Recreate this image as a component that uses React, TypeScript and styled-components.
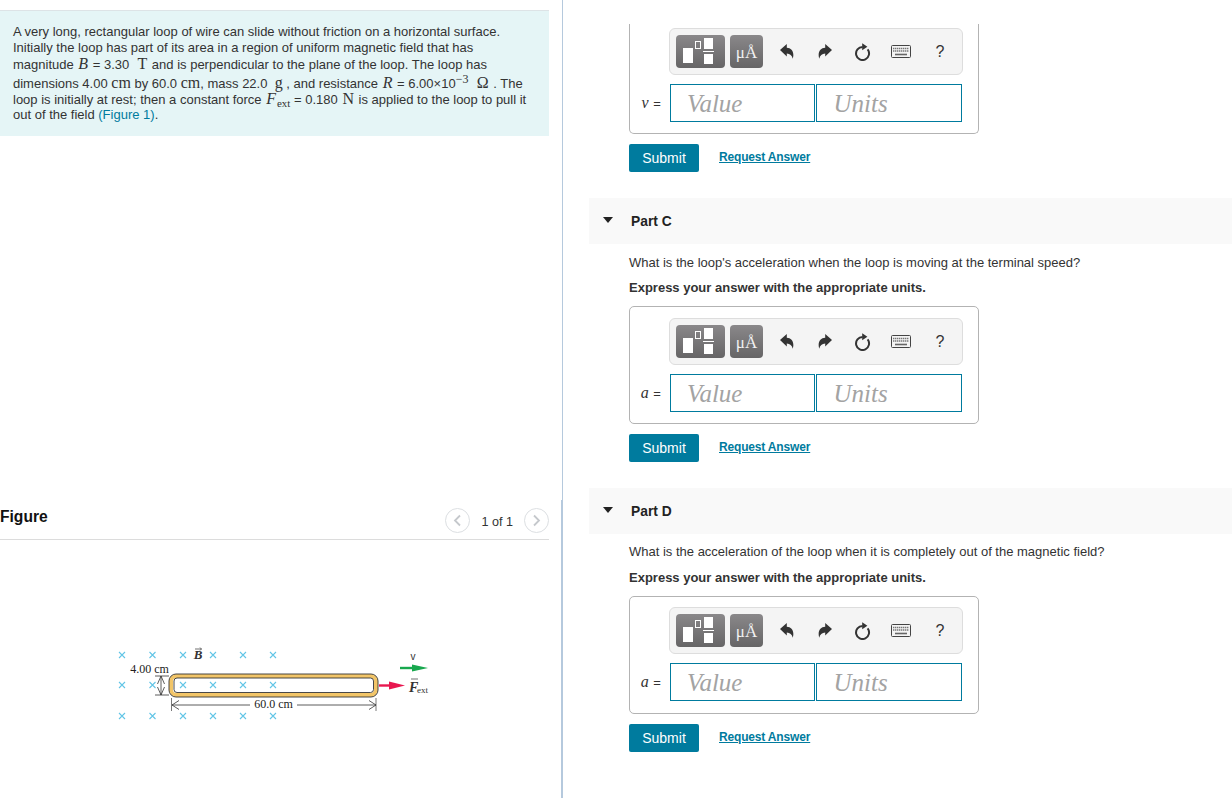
import React from 'react';
import styled, { createGlobalStyle } from 'styled-components';

const GlobalStyle = createGlobalStyle`
  html, body {
    margin: 0;
    padding: 0;
    background: #ffffff;
    overflow: hidden;
  }
  body {
    font-family: "Liberation Sans", Arial, sans-serif;
    color: #333333;
  }
`;

const Page = styled.div`
  display: grid;
  grid-template-columns: 563px 1fr;
  width: 1232px;
  height: 798px;
  overflow: hidden;
`;

const LeftPane = styled.div`
  position: relative;
  box-sizing: border-box;
  height: 798px;
  border-right: 1px solid #b5c9dd;
  padding-top: 10px;

  /* the drag handle of the split view, lower half is thicker */
  &::after {
    content: '';
    position: absolute;
    top: 500px;
    bottom: 0;
    right: 0;
    width: 1px;
    background: #b5c9dd;
  }
`;

const ProblemBox = styled.div`
  box-sizing: border-box;
  width: 549px;
  height: 126px;
  background: #e5f5f6;
  border-top: 1px solid #dde3e6;
  padding: 13px 13px 0;
  font-size: 13px;
  line-height: 16px;
  color: #333333;
`;

const Line = styled.div<{ $tall?: boolean }>`
  white-space: nowrap;
  height: ${(p) => (p.$tall ? '19px' : '16px')};
  line-height: ${(p) => (p.$tall ? '22px' : '16px')};
`;

const M = styled.span`
  font-family: "Liberation Serif", serif;
  font-size: 16px;
`;

const MI = styled(M)`
  font-style: italic;
  margin: 0 1px;
`;

const MC = styled(M)`
  margin: 0 1px;
`;

const Sup = styled.sup`
  font-size: 12px;
  line-height: 0;
  vertical-align: 5px;
  font-family: "Liberation Serif", serif;
`;

const Sub = styled.sub`
  font-family: "Liberation Serif", serif;
  font-size: 11px;
  line-height: 0;
  vertical-align: -3px;
`;

const TealLink = styled.a`
  color: #007b9e;
`;

const FigureHead = styled.div`
  box-sizing: border-box;
  width: 549px;
  height: 41px;
  margin-top: 363px;
  border-bottom: 1px solid #dcdcdc;
  display: flex;
  justify-content: space-between;
`;

const FigureTitle = styled.h2`
  margin: 9px 0 0;
  font-size: 15.6px;
  line-height: 18px;
  font-weight: 700;
  color: #111111;
`;

const Pager = styled.div`
  display: flex;
  align-items: flex-start;
  gap: 11px;
  padding-top: 9px;
  font-size: 12.6px;
  line-height: 29px;
`;

const PagerButton = styled.span`
  box-sizing: border-box;
  width: 25px;
  height: 25px;
  border: 1px solid #dcdfe2;
  border-radius: 50%;
  display: flex;
  align-items: center;
  justify-content: center;
`;

const FigureArt = styled.svg`
  display: block;
  margin: 99px 0 0 100px;
`;

const RightPane = styled.div`
  padding: 24px 0 0 26px;
`;

const Question = styled.div``;

const QuestionText = styled.p<{ $gap: number }>`
  margin: 0 0 0 40px;
  padding-top: ${(p) => p.$gap}px;
  font-size: 13px;
  line-height: 16px;
  color: #333333;
`;

const Instruction = styled.p<{ $gap: number }>`
  margin: ${(p) => p.$gap}px 0 0 40px;
  font-size: 13px;
  line-height: 16px;
  font-weight: 700;
  color: #333333;
`;

const AnswerBox = styled.div<{ $clipped?: boolean; $top?: number; $pad?: number }>`
  box-sizing: border-box;
  width: 350px;
  margin: ${(p) => p.$top ?? 0}px 0 0 40px;
  height: ${(p) => (p.$clipped ? '110px' : '118px')};
  padding: ${(p) => (p.$clipped ? 4 : p.$pad ?? 11)}px 15px 0 40px;
  border: 1px solid #b3b3b3;
  border-radius: 5px;
  ${(p) => p.$clipped && 'border-top: none; border-radius: 0 0 5px 5px;'}
`;

const Toolbar = styled.div`
  box-sizing: border-box;
  width: 294px;
  height: 47px;
  margin-left: -1px;
  display: flex;
  align-items: center;
  padding-left: 6px;
  background: #f4f4f4;
  border: 1px solid #dddddd;
  border-radius: 6px;
`;

const ToolButton = styled.span<{ $width: number }>`
  width: ${(p) => p.$width}px;
  height: 33px;
  margin-right: 5px;
  border-radius: 4px;
  background: linear-gradient(#8a888a, #666566);
  display: flex;
  align-items: center;
  justify-content: center;
`;

const UnitGlyph = styled.span`
  margin-top: 2px;
  font-family: "Liberation Serif", serif;
  font-size: 17px;
  color: #f1f1f1;
`;

const ToolIcon = styled.span<{ $left: number }>`
  width: 38px;
  margin-left: ${(p) => p.$left}px;
  display: flex;
  justify-content: center;
  align-items: center;
`;

const HelpMark = styled.span`
  font-size: 16px;
  color: #333333;
`;

const InputRow = styled.div`
  display: flex;
  align-items: center;
  margin-top: 9px;
  margin-left: -40px;
`;

const VarLabel = styled.span`
  box-sizing: border-box;
  width: 40px;
  padding-right: 9px;
  text-align: right;
  font-size: 13px;
  white-space: nowrap;
`;

const VarName = styled.span`
  margin-right: 1px;
  font-family: "Liberation Serif", serif;
  font-style: italic;
  font-size: 16px;
`;

const Field = styled.div`
  box-sizing: border-box;
  width: 146px;
  height: 38px;
  margin-right: 1px;
  padding-left: 16px;
  border: 1px solid #007b9e;
  font-family: "Liberation Serif", serif;
  font-style: italic;
  font-size: 25px;
  line-height: 38px;
  color: #a3a3a3;
`;

const ActionRow = styled.div`
  display: flex;
  align-items: center;
  gap: 20px;
  margin: 10px 0 0 40px;
`;

const SubmitButton = styled.button`
  width: 70px;
  height: 28px;
  padding: 0;
  border: none;
  border-radius: 2px;
  background: #007b9e;
  color: #ffffff;
  font-family: "Liberation Sans", Arial, sans-serif;
  font-size: 14px;
`;

const AnswerLink = styled.a`
  margin-top: -2px;
  font-size: 12px;
  letter-spacing: -0.17px;
  font-weight: 700;
  color: #007b9e;
  text-decoration: underline;
`;

const PartHeader = styled.div<{ $top: number }>`
  display: flex;
  align-items: center;
  height: 46px;
  margin-top: ${(p) => p.$top}px;
  background: #f9f9f9;
  font-size: 13.8px;
  font-weight: 700;
  color: #222222;
`;

const Caret = styled.span`
  width: 0;
  height: 0;
  margin: -2px 18px 0 14px;
  border-left: 5px solid transparent;
  border-right: 5px solid transparent;
  border-top: 6px solid #222222;
`;

const PartTitle = styled.span`
  margin-top: 1px;
`;

const TemplateIcon = () => (
  <svg width="36" height="28" viewBox="0 0 36 28">
    <rect x="0" y="10" width="10" height="15" fill="#ffffff" />
    <rect x="12.5" y="3.5" width="5" height="7" fill="none" stroke="#ffffff" />
    <rect x="21" y="0" width="9" height="11" fill="#ffffff" />
    <rect x="20" y="13" width="11" height="1" fill="#ffffff" />
    <rect x="21" y="16" width="9" height="10" fill="#ffffff" />
  </svg>
);

const ArrowIcon = ({ flip }: { flip?: boolean }) => (
  <svg width="14" height="15" viewBox="0 0 14 15" style={flip ? { transform: 'scaleX(-1)' } : undefined}>
    <path d="M0 6 L6.8 0 V3.8 C11.8 4 14.6 8 12.8 14.8 C12 11.6 10 9.8 6.8 9.6 V12.6 Z" fill="#333333" />
  </svg>
);

const ResetIcon = () => (
  <svg width="16" height="18" viewBox="0 0 16 18">
    <path d="M12.6 6.4 A6.5 6.5 0 1 1 7.6 4" fill="none" stroke="#333333" strokeWidth="2" />
    <path d="M7.2 0.2 L12.4 3.8 L7.2 7.2 Z" fill="#333333" />
  </svg>
);

const KeyboardIcon = () => (
  <svg width="20" height="13" viewBox="0 0 20 13">
    <rect x="0.5" y="0.5" width="19" height="12" rx="1" fill="#f4f4f4" stroke="#444444" />
    <path d="M2 3.5 H18 M2 6 H18" stroke="#777777" strokeWidth="1.3" strokeDasharray="1.4 0.6" />
    <path d="M4 9.5 H16" stroke="#666666" strokeWidth="1.6" />
  </svg>
);

const AnswerTools = () => (
  <Toolbar>
    <ToolButton $width={49}>
      <TemplateIcon />
    </ToolButton>
    <ToolButton $width={33}>
      <UnitGlyph>μÅ</UnitGlyph>
    </ToolButton>
    <ToolIcon $left={0}><ArrowIcon /></ToolIcon>
    <ToolIcon $left={0}><ArrowIcon flip /></ToolIcon>
    <ToolIcon $left={0}><ResetIcon /></ToolIcon>
    <ToolIcon $left={0}><KeyboardIcon /></ToolIcon>
    <ToolIcon $left={1}><HelpMark>?</HelpMark></ToolIcon>
  </Toolbar>
);

const Answer = ({ name, clipped, top, pad }: { name: string; clipped?: boolean; top?: number; pad?: number }) => (
  <>
    <AnswerBox $clipped={clipped} $top={top} $pad={pad}>
      <AnswerTools />
      <InputRow>
        <VarLabel><VarName>{name}</VarName> =</VarLabel>
        <Field>Value</Field>
        <Field>Units</Field>
      </InputRow>
    </AnswerBox>
    <ActionRow>
      <SubmitButton>Submit</SubmitButton>
      <AnswerLink>Request Answer</AnswerLink>
    </ActionRow>
  </>
);

const crossRows = [656, 686, 717];
const crossCols = [122, 152.5, 183, 213, 243, 273];

const Cross = ({ x, y }: { x: number; y: number }) => (
  <path
    d={`M${x - 3} ${y - 3} L${x + 3} ${y + 3} M${x + 3} ${y - 3} L${x - 3} ${y + 3}`}
    stroke="#62c5e6"
    strokeWidth="1.1"
    fill="none"
  />
);

const LoopFigure = () => (
  <FigureArt width="340" height="90" viewBox="100 640 340 90">
    {crossRows.map((y) => crossCols.map((x) => <Cross key={`${x}-${y}`} x={x} y={y} />))}
    <text x="198" y="660" fontFamily="Liberation Serif" fontStyle="italic" fontWeight="700" fontSize="13" fill="#333" textAnchor="middle">B</text>
    <path d="M195 650 H201.5 M200 648.5 L201.5 650 L200 651.5" stroke="#333" strokeWidth="0.7" fill="none" />
    <text x="149.5" y="674" fontFamily="Liberation Serif" fontSize="12" fill="#222" textAnchor="middle">4.00 cm</text>
    <rect x="171" y="677" width="205" height="19" rx="5.5" fill="none" stroke="#f2c568" strokeWidth="4" />
    <rect x="169" y="675" width="209" height="23" rx="7" fill="none" stroke="#333" strokeWidth="0.9" />
    <rect x="174" y="679" width="199.5" height="14.5" rx="3" fill="none" stroke="#333" strokeWidth="0.9" />
    <path d="M155 677 H169 M155 696 H169 M161 677 V696" stroke="#333" strokeWidth="0.8" fill="none" />
    <path d="M161 677 L164.5 685 M161 677 L157.5 685 M161 696 L164.5 688 M161 696 L157.5 688" stroke="#333" strokeWidth="0.8" fill="none" />
    <path d="M171.5 699 V712 M376 699 V712" stroke="#555" strokeWidth="0.8" />
    <path d="M172 706 H250 M297 706 H376 M179 701.5 L172 706 L179 710.5 M369 701.5 L376 706 L369 710.5" stroke="#333" strokeWidth="0.8" fill="none" />
    <text x="273.5" y="708.5" fontFamily="Liberation Serif" fontSize="12" fill="#222" textAnchor="middle">60.0 cm</text>
    <path d="M379 686.5 H392" stroke="#e8174f" strokeWidth="2.4" />
    <path d="M389 682.5 L405 686.5 L389 690.5 Z" fill="#e8174f" />
    <text x="409" y="692.5" fontFamily="Liberation Serif" fontStyle="italic" fontWeight="700" fontSize="14" fill="#333">F</text>
    <text x="417" y="694" fontFamily="Liberation Serif" fontSize="9" fill="#333">ext</text>
    <path d="M411 680 H418" stroke="#333" strokeWidth="0.7" />
    <text x="413" y="661" fontFamily="Liberation Sans" fontSize="10" fill="#333" textAnchor="middle">v</text>
    <path d="M400 669 H416" stroke="#18a84e" strokeWidth="2.4" />
    <path d="M412 665.5 L428 669 L412 672.5 Z" fill="#18a84e" />
  </FigureArt>
);

const PagerArrow = ({ right }: { right?: boolean }) => (
  <svg width="9" height="13" viewBox="0 0 9 13">
    <path d={right ? 'M2 1.5 L7 6.5 L2 11.5' : 'M7 1.5 L2 6.5 L7 11.5'} fill="none" stroke="#c5c8cc" strokeWidth="1.8" />
  </svg>
);

export default function App() {
  return (
    <Page>
      <GlobalStyle />
      <LeftPane>
        <ProblemBox>
          <Line>A very long, rectangular loop of wire can slide without friction on a horizontal surface.</Line>
          <Line>Initially the loop has part of its area in a region of uniform magnetic field that has</Line>
          <Line>magnitude <MI>B</MI> = 3.30 &nbsp;<MC>T</MC> and is perpendicular to the plane of the loop. The loop has</Line>
          <Line $tall>dimensions 4.00 <M>cm</M> by 60.0 <M>cm</M>, mass 22.0 &nbsp;<M>g</M> , and resistance <MI>R</MI> = 6.00×10<Sup>−3</Sup> &nbsp;<MC>Ω</MC> . The</Line>
          <Line>loop is initially at rest; then a constant force <MI>F</MI><Sub>ext</Sub> = 0.180 <MC>N</MC> is applied to the loop to pull it</Line>
          <Line>out of the field <TealLink>(Figure 1)</TealLink>.</Line>
        </ProblemBox>
        <FigureHead>
          <FigureTitle>Figure</FigureTitle>
          <Pager>
            <PagerButton><PagerArrow /></PagerButton>
            <span>1 of 1</span>
            <PagerButton><PagerArrow right /></PagerButton>
          </Pager>
        </FigureHead>
        <LoopFigure />
      </LeftPane>
      <RightPane>
        <Answer name="v" clipped />
        <Question>
          <PartHeader $top={26}><Caret /><PartTitle>Part C</PartTitle></PartHeader>
          <QuestionText $gap={11}>What is the loop's acceleration when the loop is moving at the terminal speed?</QuestionText>
          <Instruction $gap={9}>Express your answer with the appropriate units.</Instruction>
          <Answer name="a" top={10} />
        </Question>
        <Question>
          <PartHeader $top={26}><Caret /><PartTitle>Part D</PartTitle></PartHeader>
          <QuestionText $gap={10}>What is the acceleration of the loop when it is completely out of the magnetic field?</QuestionText>
          <Instruction $gap={10}>Express your answer with the appropriate units.</Instruction>
          <Answer name="a" top={10} pad={10} />
        </Question>
      </RightPane>
    </Page>
  );
}
